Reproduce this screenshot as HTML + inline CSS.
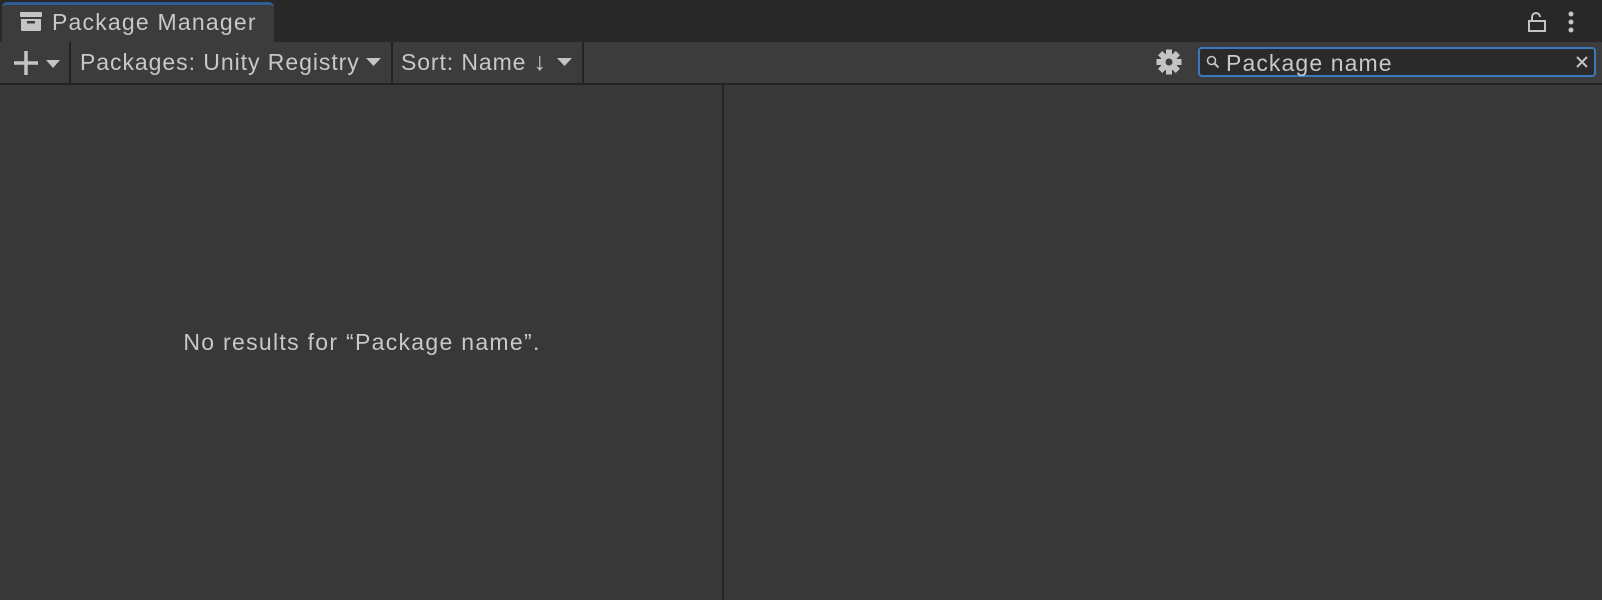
<!DOCTYPE html>
<html><head><style>
body{margin:0;width:1602px;height:600px;background:#383838;font-family:"Liberation Sans",sans-serif;color:#c8c8c8;overflow:hidden;position:relative}
.abs{position:absolute}
.t{font-size:23px;white-space:nowrap;line-height:26px}
</style></head><body>
<div class="abs" style="left:0;top:0;width:1602px;height:42px;background:#282828"></div>
<div class="abs" style="left:2px;top:2px;width:272px;height:40px;background:#3c3c3c;border-top:3px solid #2e5f94;border-radius:5px 5px 0 0;box-sizing:border-box"></div>
<svg class="abs" style="left:20px;top:12px" width="22" height="20" viewBox="0 0 22 20"><rect x="0" y="0" width="22" height="5" rx="1" fill="#c4c4c4"/><path d="M1 7h20v11a1 1 0 0 1-1 1H2a1 1 0 0 1-1-1z" fill="#c4c4c4"/><rect x="7" y="9" width="8" height="2.5" fill="#3c3c3c"/></svg>
<div class="abs t" style="left:52px;top:9px;letter-spacing:1.2px">Package Manager</div>
<svg class="abs" style="left:1528px;top:12px" width="18" height="20" viewBox="0 0 18 20"><path d="M4 9V5a4 4 0 0 1 8 0" fill="none" stroke="#c4c4c4" stroke-width="2"/><rect x="1" y="9" width="16" height="10" fill="none" stroke="#c4c4c4" stroke-width="2"/></svg>
<svg class="abs" style="left:1567px;top:11px" width="8" height="22"><circle cx="4" cy="3" r="2.5" fill="#c4c4c4"/><circle cx="4" cy="11" r="2.5" fill="#c4c4c4"/><circle cx="4" cy="19" r="2.5" fill="#c4c4c4"/></svg>
<div class="abs" style="left:0;top:42px;width:1602px;height:41px;background:#3c3c3c"></div>
<div class="abs" style="left:0;top:83px;width:1602px;height:2px;background:#232323"></div>
<div class="abs" style="left:69px;top:42px;width:2px;height:41px;background:#232323"></div>
<div class="abs" style="left:391px;top:42px;width:2px;height:41px;background:#232323"></div>
<div class="abs" style="left:582px;top:42px;width:2px;height:41px;background:#232323"></div>
<svg class="abs" style="left:13px;top:50px" width="50" height="26"><path d="M13 1v24M1 13h24" stroke="#c4c4c4" stroke-width="3.5"/><path d="M33 10h14l-7 8z" fill="#c4c4c4"/></svg>
<div class="abs t" style="left:80px;top:49px;letter-spacing:0.95px">Packages: Unity Registry</div>
<svg class="abs" style="left:366px;top:58px" width="16" height="10"><path d="M0 0h15l-7.5 8z" fill="#c4c4c4"/></svg>
<div class="abs t" style="left:401px;top:49px;letter-spacing:0.9px">Sort: Name <span style="font-size:25px;line-height:20px">↓</span></div>
<svg class="abs" style="left:557px;top:58px" width="16" height="10"><path d="M0 0h15l-7.5 8z" fill="#c4c4c4"/></svg>
<svg class="abs" style="left:1156px;top:49px" width="26" height="26" viewBox="-13 -13 26 26"><g fill="#c4c4c4"><circle r="8.5"/><g id="g"><rect x="-3" y="-12.5" width="6" height="6"/></g><use href="#g" transform="rotate(45)"/><use href="#g" transform="rotate(90)"/><use href="#g" transform="rotate(135)"/><use href="#g" transform="rotate(180)"/><use href="#g" transform="rotate(225)"/><use href="#g" transform="rotate(270)"/><use href="#g" transform="rotate(315)"/></g><circle r="3.5" fill="#3c3c3c"/></svg>
<div class="abs" style="left:1198px;top:47px;width:398px;height:30px;background:#2a2a2a;border:2px solid #3a79bb;border-radius:4px;box-sizing:border-box"></div>
<svg class="abs" style="left:1206px;top:55px" width="14" height="14"><circle cx="5.5" cy="5.5" r="4" fill="none" stroke="#c4c4c4" stroke-width="1.6"/><path d="M8.5 8.5l4 4" stroke="#c4c4c4" stroke-width="2"/></svg>
<div class="abs t" style="left:1226px;top:50px;letter-spacing:1.1px">Package name</div>
<svg class="abs" style="left:1575px;top:55px" width="14" height="14"><path d="M2 2l10 10M12 2L2 12" stroke="#c4c4c4" stroke-width="2"/></svg>
<div class="abs" style="left:722px;top:85px;width:2px;height:515px;background:#232323"></div>
<div class="abs t" style="left:165px;top:329px;width:394px;text-align:center;letter-spacing:1.3px">No results for “Package name”.</div>
</body></html>
